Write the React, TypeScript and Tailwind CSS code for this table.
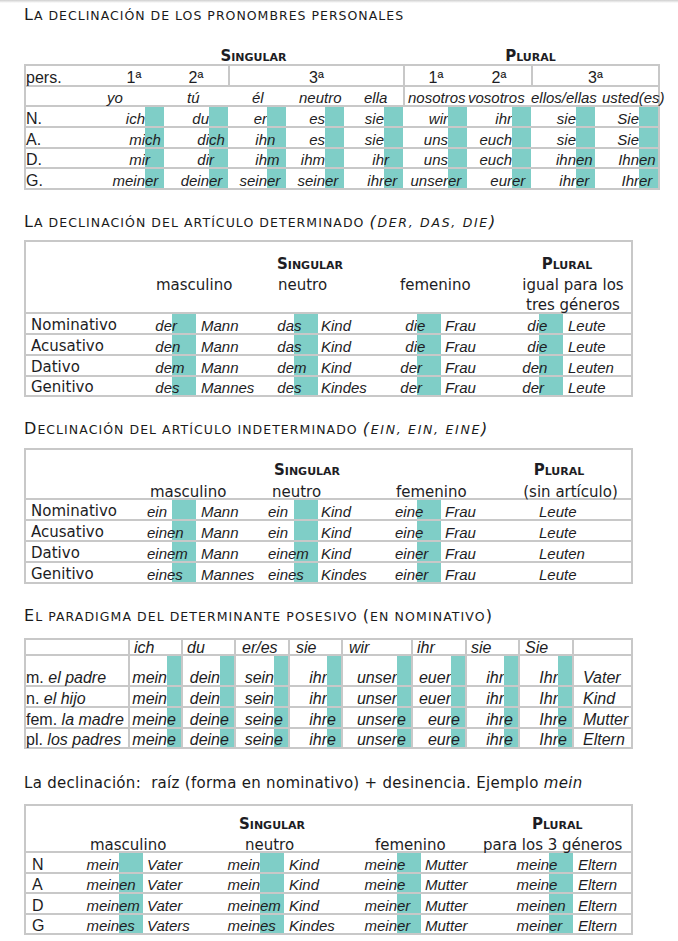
import React from "react";

type SC = [string, string];

const LINE = "border-[#c8c8c8]";

function Paren({ text, italic }: { text: string; italic: boolean }) {
  return italic ? (
    <span className="italic">
      <span className="text-[16px] tracking-[1.7px]">(</span>
      <span className="text-[12.5px] uppercase tracking-[1.7px]">{text}</span>
      <span className="text-[16px]">)</span>
    </span>
  ) : (
    <span>
      <span className="text-[16px] tracking-[1.1px]">(</span>
      <span className="text-[12.5px] uppercase tracking-[1.1px]">{text}</span>
      <span className="text-[16px]">)</span>
    </span>
  );
}

function Stem({ s, tw, className = "" }: { s: SC; tw: string; className?: string }) {
  return (
    <div className={`h-full flex items-stretch min-w-0 ${className}`}>
      <div className="flex-1 flex items-end justify-end whitespace-nowrap">{s[0]}</div>
      <div className={`${tw} shrink-0 bg-[#7fcec7] flex items-end whitespace-nowrap`}>{s[1]}</div>
    </div>
  );
}

function SmallCapsBold({ children }: { children: React.ReactNode }) {
  return (
    <span className="font-['DejaVu_Sans',sans-serif] font-bold text-[15px] [font-variant:small-caps]">{children}</span>
  );
}

/* ---------------- Table 1 ---------------- */
const T1COLS = "grid grid-cols-[78px_60px_64px_58px_58px_59px_64px_64px_64px_63px]";
const t1rows: { label: string; h: string; cells: SC[] }[] = [
  { label: "N.", h: "h-[21px]", cells: [["ich", ""], ["du", ""], ["er", ""], ["es", ""], ["sie", ""], ["wir", ""], ["ihr", ""], ["sie", ""], ["Sie", ""]] },
  { label: "A.", h: "h-[21px]", cells: [["mi", "ch"], ["di", "ch"], ["ih", "n"], ["es", ""], ["sie", ""], ["uns", ""], ["euch", ""], ["sie", ""], ["Sie", ""]] },
  { label: "D.", h: "h-[20px]", cells: [["mi", "r"], ["di", "r"], ["ih", "m"], ["ihm", ""], ["ih", "r"], ["uns", ""], ["euch", ""], ["ihn", "en"], ["Ihn", "en"]] },
  { label: "G.", h: "h-[21px]", cells: [["mein", "er"], ["dein", "er"], ["sein", "er"], ["sein", "er"], ["ihr", "er"], ["unser", "er"], ["eur", "er"], ["ihr", "er"], ["Ihr", "er"]] },
];

function Table1() {
  return (
    <div>
      <div className={`ml-[2px] h-[39px] ${T1COLS} leading-[15px]`}>
        <div className="col-start-2 col-span-5 flex items-end justify-center">
          <SmallCapsBold>Singular</SmallCapsBold>
        </div>
        <div className="col-start-7 col-span-4 flex items-end justify-center">
          <SmallCapsBold>Plural</SmallCapsBold>
        </div>
      </div>
      <div className={`w-[636px] border-2 ${LINE}`}>
        <div className={`${T1COLS} h-[19px] text-[16px] leading-[15px]`}>
          <div className="flex items-end">pers.</div>
          <div className="flex items-end justify-center">1ª</div>
          <div className="flex items-end justify-center">2ª</div>
          <div className={`col-span-3 border-l-2 ${LINE} flex items-end justify-center`}>3ª</div>
          <div className={`border-l-2 ${LINE} flex items-end justify-center`}>1ª</div>
          <div className="flex items-end justify-center">2ª</div>
          <div className={`col-span-2 border-l-2 ${LINE} flex items-end justify-center`}>3ª</div>
        </div>
        <div className={`${T1COLS} h-[20px] border-t-2 ${LINE} text-[15px] leading-[14px] italic whitespace-nowrap`}>
          <div />
          <div className="flex items-end pl-[3px]">yo</div>
          <div className="flex items-end pl-[23px]">tú</div>
          <div className="flex items-end pl-[24px]">él</div>
          <div className="flex items-end pl-[13px]">neutro</div>
          <div className="flex items-end pl-[20px]">ella</div>
          <div className={`flex items-end pl-[3px] border-l-2 ${LINE}`}>nosotros</div>
          <div className="flex items-end pl-[1px]">vosotros</div>
          <div className="flex items-end">ellos/ellas</div>
          <div className="flex items-end pl-[7px]">usted(es)</div>
        </div>
        {t1rows.map((r) => (
          <div key={r.label} className={`${T1COLS} ${r.h} border-t-2 ${LINE} text-[15px] leading-[14px]`}>
            <div className="flex items-end text-[16px] leading-[15px]">{r.label}</div>
            {r.cells.map((c, i) => (
              <Stem key={i} s={c} tw="w-[19px]" className="italic" />
            ))}
          </div>
        ))}
      </div>
    </div>
  );
}

/* ---------------- Table 2 ---------------- */
const T2COLS = "grid grid-cols-[124px_46px_74px_48px_77px_46px_74px_48px_68px]";
const t2rows: { label: string; h: string; a: SC; n1: string; b: SC; n2: string; c: SC; n3: string; d: SC; n4: string }[] = [
  { label: "Nominativo", h: "h-[21px]", a: ["de", "r"], n1: "Mann", b: ["da", "s"], n2: "Kind", c: ["di", "e"], n3: "Frau", d: ["di", "e"], n4: "Leute" },
  { label: "Acusativo", h: "h-[21px]", a: ["de", "n"], n1: "Mann", b: ["da", "s"], n2: "Kind", c: ["di", "e"], n3: "Frau", d: ["di", "e"], n4: "Leute" },
  { label: "Dativo", h: "h-[21px]", a: ["de", "m"], n1: "Mann", b: ["de", "m"], n2: "Kind", c: ["de", "r"], n3: "Frau", d: ["de", "n"], n4: "Leuten" },
  { label: "Genitivo", h: "h-[20px]", a: ["de", "s"], n1: "Mannes", b: ["de", "s"], n2: "Kindes", c: ["de", "r"], n3: "Frau", d: ["de", "r"], n4: "Leute" },
];

function Table2() {
  return (
    <div className={`mt-[8px] w-[609px] border-2 ${LINE}`}>
      <div className={`${T2COLS} h-[70px] grid-rows-[30px_21px_19px] font-['DejaVu_Sans',sans-serif] text-[15px] leading-[15px] whitespace-nowrap`}>
        <div className="col-start-4 row-start-1 col-span-2 flex items-end pl-[7px]">
          <SmallCapsBold>Singular</SmallCapsBold>
        </div>
        <div className="col-start-8 col-span-2 row-start-1 flex items-end justify-center pr-[12px]">
          <SmallCapsBold>Plural</SmallCapsBold>
        </div>
        <div className="col-start-2 col-span-2 row-start-2 flex items-end pl-[6px]">masculino</div>
        <div className="col-start-4 col-span-2 row-start-2 flex items-end pl-[8px]">neutro</div>
        <div className="col-start-6 col-span-2 row-start-2 flex items-end pl-[5px]">femenino</div>
        <div className="col-start-8 col-span-2 row-start-2 flex items-end justify-center">igual para los</div>
        <div className="col-start-8 col-span-2 row-start-3 flex items-end justify-center leading-[13px]">tres géneros</div>
      </div>
      {t2rows.map((r) => (
        <div key={r.label} className={`${T2COLS} ${r.h} border-t-2 ${LINE} text-[15px] leading-[14px] whitespace-nowrap`}>
          <div className="flex items-end pl-[5px] font-['DejaVu_Sans',sans-serif] leading-[15px]">{r.label}</div>
          <Stem s={r.a} tw="w-[24px]" className="italic" />
          <div className="italic flex items-end pl-[5px]">{r.n1}</div>
          <Stem s={r.b} tw="w-[24px]" className="italic" />
          <div className="italic flex items-end pl-[3px]">{r.n2}</div>
          <Stem s={r.c} tw="w-[24px]" className="italic" />
          <div className="italic flex items-end pl-[4px]">{r.n3}</div>
          <Stem s={r.d} tw="w-[24px]" className="italic" />
          <div className="italic flex items-end pl-[5px]">{r.n4}</div>
        </div>
      ))}
    </div>
  );
}

/* ---------------- Table 3 ---------------- */
const T3COLS = "grid grid-cols-[120px_50px_70px_52px_74px_49px_74px_48px_68px]";
const TEAL24 = "bg-[linear-gradient(to_left,#7fcec7_24px,transparent_24px)]";
const t3rows = [
  { label: "Nominativo", a: "ein", b: "ein", c: "eine", d: "Leute" },
  { label: "Acusativo", a: "einen", b: "ein", c: "eine", d: "Leute" },
  { label: "Dativo", a: "einem", b: "einem", c: "einer", d: "Leuten" },
  { label: "Genitivo", a: "eines", b: "eines", c: "einer", d: "Leute" },
];
const t3nouns = [
  ["Mann", "Kind"],
  ["Mann", "Kind"],
  ["Mann", "Kind"],
  ["Mannes", "Kindes"],
];

function Table3() {
  return (
    <div className={`mt-[9px] w-[609px] border-2 ${LINE}`}>
      <div className={`${T3COLS} h-[48px] grid-rows-[28px_20px] font-['DejaVu_Sans',sans-serif] text-[15px] leading-[15px] whitespace-nowrap`}>
        <div className="col-start-4 row-start-1 col-span-2 flex items-end pl-[8px]">
          <SmallCapsBold>Singular</SmallCapsBold>
        </div>
        <div className="col-start-8 col-span-2 row-start-1 flex items-end justify-center pr-[28px]">
          <SmallCapsBold>Plural</SmallCapsBold>
        </div>
        <div className="col-start-2 col-span-2 row-start-2 flex items-end pl-[4px] leading-[11px]">masculino</div>
        <div className="col-start-4 col-span-2 row-start-2 flex items-end pl-[6px] leading-[11px]">neutro</div>
        <div className="col-start-6 col-span-2 row-start-2 flex items-end pl-[4px] leading-[11px]">femenino</div>
        <div className="col-start-8 col-span-2 row-start-2 flex items-end justify-center pr-[5px] leading-[11px]">(sin artículo)</div>
      </div>
      {t3rows.map((r, i) => (
        <div key={r.label} className={`${T3COLS} h-[21px] border-t-2 ${LINE} text-[15px] leading-[14px] whitespace-nowrap`}>
          <div className="flex items-end pl-[5px] font-['DejaVu_Sans',sans-serif] leading-[15px]">{r.label}</div>
          <div className={`italic flex items-end pl-[1px] ${TEAL24}`}>{r.a}</div>
          <div className="italic flex items-end pl-[5px]">{t3nouns[i][0]}</div>
          <div className={`italic flex items-end pl-[2px] ${TEAL24}`}>{r.b}</div>
          <div className="italic flex items-end pl-[3px]">{t3nouns[i][1]}</div>
          <div className={`italic flex items-end pl-[3px] ${TEAL24}`}>{r.c}</div>
          <div className="italic flex items-end pl-[4px]">Frau</div>
          <div className="col-span-2 italic flex items-end pl-[24px]">{r.d}</div>
        </div>
      ))}
    </div>
  );
}

/* ---------------- Table 4 ---------------- */
const T4COLS = "grid grid-cols-[102px_53px_53px_54px_53px_70px_54px_53px_54px_59px]";
const t4head: { t: string; pl: string }[] = [
  { t: "ich", pl: "pl-[4px]" },
  { t: "du", pl: "pl-[4px]" },
  { t: "er/es", pl: "pl-[6px]" },
  { t: "sie", pl: "pl-[6px]" },
  { t: "wir", pl: "pl-[6px]" },
  { t: "ihr", pl: "pl-[4px]" },
  { t: "sie", pl: "pl-[4px]" },
  { t: "Sie", pl: "pl-[5px]" },
];
const masc: SC[] = [["mein", ""], ["dein", ""], ["sein", ""], ["ihr", ""], ["unser", ""], ["euer", ""], ["ihr", ""], ["Ihr", ""]];
const femi: SC[] = [["mein", "e"], ["dein", "e"], ["sein", "e"], ["ihr", "e"], ["unser", "e"], ["eur", "e"], ["ihr", "e"], ["Ihr", "e"]];
const t4rows: { a: string; b: string; h: string; cells: SC[]; noun: string }[] = [
  { a: "m.", b: "el padre", h: "h-[31px]", cells: masc, noun: "Vater" },
  { a: "n.", b: "el hijo", h: "h-[21px]", cells: masc, noun: "Kind" },
  { a: "fem.", b: "la madre", h: "h-[21px]", cells: femi, noun: "Mutter" },
  { a: "pl.", b: "los padres", h: "h-[20px]", cells: femi, noun: "Eltern" },
];

function Table4() {
  return (
    <div className={`mt-[12px] w-[609px] border-2 ${LINE} text-[16px]`}>
      <div className={`${T4COLS} h-[14px] leading-[13px] italic whitespace-nowrap`}>
        <div />
        {t4head.map((h, i) => (
          <div key={i} className={`border-l-2 ${LINE} flex items-end ${h.pl}`}>{h.t}</div>
        ))}
        <div className={`border-l-2 ${LINE}`} />
      </div>
      {t4rows.map((r) => (
        <div key={r.a} className={`${T4COLS} ${r.h} border-t-2 ${LINE} leading-[15px] whitespace-nowrap`}>
          <div className="flex items-end">
            <span>{r.a}&nbsp;</span>
            <span className="italic">{r.b}</span>
          </div>
          {r.cells.map((c, i) => (
            <Stem key={i} s={c} tw="w-[14px]" className={`border-l-2 ${LINE} italic`} />
          ))}
          <div className={`border-l-2 ${LINE} italic flex items-end pl-[9px]`}>{r.noun}</div>
        </div>
      ))}
    </div>
  );
}

/* ---------------- Table 5 ---------------- */
const T5COLS = "grid grid-cols-[49px_68px_72px_69px_66px_71px_79px_73px_58px]";
const t5rows: { l: string; h: string; a: SC; n1: string; b: SC; n2: string; c: SC; n3: string; d: SC; n4: string }[] = [
  { l: "N", h: "h-[21px]", a: ["mein", ""], n1: "Vater", b: ["mein", ""], n2: "Kind", c: ["mein", "e"], n3: "Mutter", d: ["mein", "e"], n4: "Eltern" },
  { l: "A", h: "h-[20px]", a: ["mein", "en"], n1: "Vater", b: ["mein", ""], n2: "Kind", c: ["mein", "e"], n3: "Mutter", d: ["mein", "e"], n4: "Eltern" },
  { l: "D", h: "h-[21px]", a: ["mein", "em"], n1: "Vater", b: ["mein", "em"], n2: "Kind", c: ["mein", "er"], n3: "Mutter", d: ["mein", "en"], n4: "Eltern" },
  { l: "G", h: "h-[20px]", a: ["mein", "es"], n1: "Vaters", b: ["mein", "es"], n2: "Kindes", c: ["mein", "er"], n3: "Mutter", d: ["mein", "er"], n4: "Eltern" },
];

function Table5() {
  return (
    <div className={`mt-[11px] w-[609px] border-2 ${LINE}`}>
      <div className={`${T5COLS} h-[45px] grid-rows-[26px_19px] font-['DejaVu_Sans',sans-serif] text-[15px] leading-[15px] whitespace-nowrap`}>
        <div className="col-start-4 row-start-1 col-span-2 flex items-end pl-[24px]">
          <SmallCapsBold>Singular</SmallCapsBold>
        </div>
        <div className="col-start-7 col-span-3 row-start-1 flex items-end pl-[111px]">
          <SmallCapsBold>Plural</SmallCapsBold>
        </div>
        <div className="col-start-2 col-span-2 row-start-2 flex items-end pl-[15px] leading-[11px]">masculino</div>
        <div className="col-start-4 col-span-2 row-start-2 flex items-end pl-[30px] leading-[11px]">neutro</div>
        <div className="col-start-6 col-span-2 row-start-2 flex items-end pl-[25px] leading-[11px]">femenino</div>
        <div className="col-start-7 col-span-3 row-start-2 flex items-end pl-[62px] leading-[11px]">para los 3 géneros</div>
      </div>
      {t5rows.map((r) => (
        <div key={r.l} className={`${T5COLS} ${r.h} border-t-2 ${LINE} text-[15px] leading-[14px] whitespace-nowrap`}>
          <div className="flex items-end pl-[6px] text-[16px] leading-[15px]">{r.l}</div>
          <Stem s={r.a} tw="w-[24px]" className="italic" />
          <div className="italic flex items-end pl-[4px]">{r.n1}</div>
          <Stem s={r.b} tw="w-[24px]" className="italic" />
          <div className="italic flex items-end pl-[5px]">{r.n2}</div>
          <Stem s={r.c} tw="w-[24px]" className="italic" />
          <div className="italic flex items-end pl-[4px]">{r.n3}</div>
          <Stem s={r.d} tw="w-[24px]" className="italic" />
          <div className="italic flex items-end pl-[5px]">{r.n4}</div>
        </div>
      ))}
    </div>
  );
}

const HEAD = "h-[20px] leading-[20px] whitespace-nowrap font-['DejaVu_Sans',sans-serif] text-[#1a1a1a]";

export default function App() {
  return (
    <div className="w-[678px] h-[941px] overflow-hidden bg-white text-[#1d1d24] font-['Liberation_Sans',Arial,sans-serif]">
      <div className="h-[3px] bg-gradient-to-b from-[#cfcfcf] to-white" />
      <div className="pl-[24px]">
        <div className={`mt-[2px] ${HEAD}`}>
          <span className="text-[16px] tracking-[1px]">L</span>
          <span className="text-[12.5px] uppercase tracking-[1px]">a declinación de los pronombres personales</span>
        </div>
        <Table1 />
        <div className={`mt-[22px] ${HEAD}`}>
          <span className="text-[16px] tracking-[1.05px]">L</span>
          <span className="text-[12.5px] uppercase tracking-[1.05px]">a declinación del artículo determinado </span>
          <Paren text="der, das, die" italic />
        </div>
        <Table2 />
        <div className={`mt-[22px] ${HEAD}`}>
          <span className="text-[16px] tracking-[1.05px]">D</span>
          <span className="text-[12.5px] uppercase tracking-[1.05px]">eclinación del artículo indeterminado </span>
          <Paren text="ein, ein, eine" italic />
        </div>
        <Table3 />
        <div className={`mt-[22px] ${HEAD}`}>
          <span className="text-[16px] tracking-[1.05px]">E</span>
          <span className="text-[12.5px] uppercase tracking-[1.05px]">l paradigma del determinante posesivo </span>
          <Paren text="en nominativo" italic={false} />
        </div>
        <Table4 />
        <div className="mt-[24px] h-[20px] leading-[20px] whitespace-pre font-['DejaVu_Sans',sans-serif] text-[15px] tracking-[0.3px] text-[#1a1a1a]">
          {"La declinación:  raíz (forma en nominativo) + desinencia. Ejemplo "}
          <span className="italic">mein</span>
        </div>
        <Table5 />
      </div>
    </div>
  );
}
